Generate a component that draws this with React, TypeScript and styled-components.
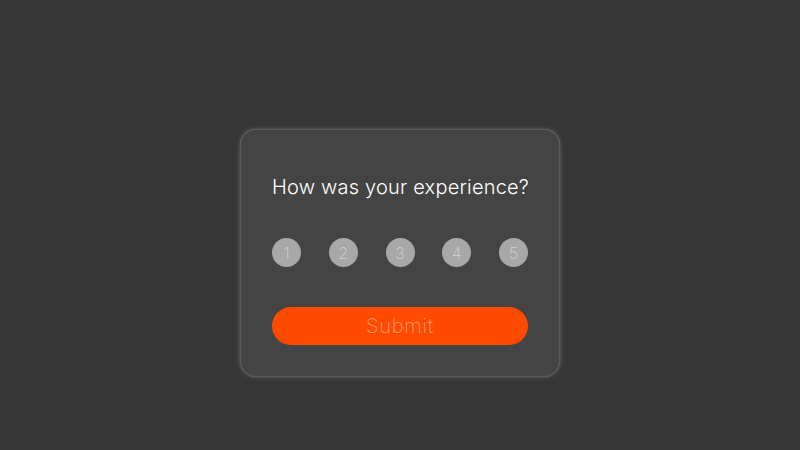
import React, { useState } from "react";
import styled, { createGlobalStyle } from "styled-components";

const Global = createGlobalStyle`
  html, body { margin: 0; padding: 0; }
  body { background: #363636; font-family: Inter, "Open Sans", sans-serif; }
`;

const Page = styled.div`
  width: 800px;
  height: 450px;
  box-sizing: border-box;
  padding-top: 129px;
  display: flex;
  align-items: flex-start;
  justify-content: center;
`;

const Card = styled.div`
  width: 320px;
  height: 248px;
  box-sizing: border-box;
  padding: 44px 31px 0;
  background: #444444;
  border-radius: 16px;
  border: 1px solid #595959;
  box-shadow: 0 0 5px rgba(255, 255, 255, 0.2), 0 0 1px rgba(255,255,255,0.25);
  display: flex;
  flex-direction: column;
  align-items: stretch;
`;

const Title = styled.h2`
  margin: 0;
  font-family: Inter, sans-serif;
  font-weight: 300;
  font-size: 20px;
  line-height: 26px;
  color: #ffffff;
  text-align: center;
  letter-spacing: 0.2px;
  white-space: nowrap;
`;

const Ratings = styled.div`
  display: flex;
  justify-content: space-between;
  margin-top: 38px;
`;

const Rate = styled.button<{ $active: boolean }>`
  width: 29px;
  height: 29px;
  border-radius: 50%;
  border: none;
  padding: 0;
  background: ${(p) => (p.$active ? "#ff4b00" : "#a8a8a8")};
  color: #d2d2d2;
  font-family: Inter, sans-serif;
  font-weight: 200;
  font-size: 16px;
  display: flex;
  align-items: center;
  justify-content: center;
  cursor: pointer;
`;

const Submit = styled.button`
  margin-top: 40px;
  height: 38px;
  border: none;
  border-radius: 19px;
  background: #ff4b00;
  color: #ffa07a;
  font-family: Inter, sans-serif;
  font-weight: 200;
  font-size: 20px;
  letter-spacing: 0.8px;
  cursor: pointer;
`;

export default function App() {
  const [sel, setSel] = useState<number | null>(null);
  return (
    <>
      <Global />
      <Page>
        <Card>
          <Title>How was your experience?</Title>
          <Ratings>
            {[1, 2, 3, 4, 5].map((n) => (
              <Rate key={n} $active={sel === n} onClick={() => setSel(n)}>
                {n}
              </Rate>
            ))}
          </Ratings>
          <Submit>Submit</Submit>
        </Card>
      </Page>
    </>
  );
}
